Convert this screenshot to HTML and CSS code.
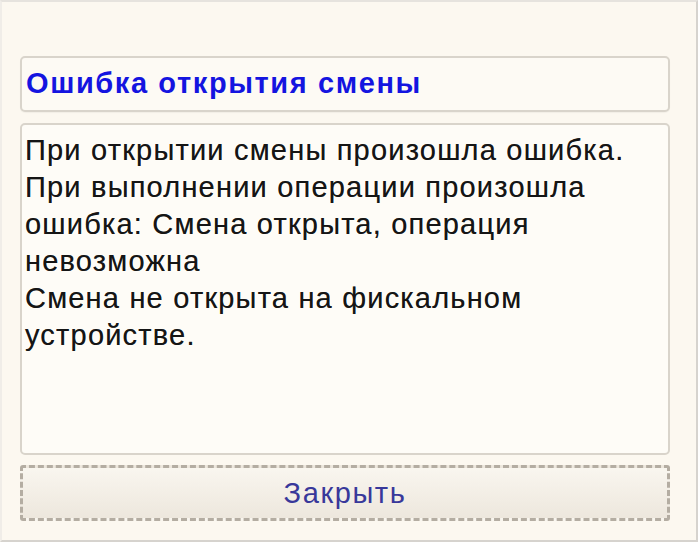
FILE: index.html
```html
<!DOCTYPE html>
<html lang="ru">
<head>
<meta charset="utf-8">
<link rel="stylesheet" href="styles.css">
</head>
<body>
<div class="window">
  <div class="title-box">Ошибка открытия смены</div>
  <div class="message-box">При открытии смены произошла ошибка.<br>При выполнении операции произошла ошибка: Смена открыта, операция невозможна<br>Смена не открыта на фискальном устройстве.</div>
  <div class="button"><span>Закрыть</span></div>
</div>
</body>
</html>
```
FILE: styles.css
```css
html, body {
  margin: 0;
  padding: 0;
  width: 698px;
  height: 542px;
  overflow: hidden;
  background: #fbf7ef;
}
.window {
  box-sizing: border-box;
  width: 698px;
  height: 542px;
  border-top: 2px solid #e6e3de;
  border-right: 2px solid #d6d3ce;
  border-bottom: 2px solid #d6d3ce;
  border-left: 2px solid #f0ede8;
  background: #fcf8f0;
  padding: 54px 26px 18px 18px;
  display: flex;
  flex-direction: column;
  font-family: "Liberation Sans", Arial, sans-serif;
}
.title-box {
  box-sizing: border-box;
  height: 56px;
  border: 2px solid #d9d4cb;
  border-radius: 5px;
  background: #fdfaf4;
  color: #1414e0;
  font-weight: bold;
  font-size: 29px;
  letter-spacing: 1.6px;
  display: flex;
  align-items: center;
  padding: 0 0 1px 4px;
  box-shadow: 0 1px 1px rgba(0,0,0,0.04);
}
.message-box {
  box-sizing: border-box;
  margin-top: 11px;
  height: 332px;
  border: 2px solid #d9d4cb;
  border-radius: 5px;
  background: #fefcf7;
  color: #151515;
  font-size: 29px;
  letter-spacing: 1.2px;
  line-height: 37px;
  padding: 7px 20px 0 3px;
  text-shadow: 0 0 0.5px rgba(0,0,0,0.5);
}
.button {
  box-sizing: border-box;
  margin-top: 10px;
  height: 56px;
  border: 3px dashed #b4ada2;
  border-radius: 3px;
  background: linear-gradient(#f9f6ef, #ede7dd);
  display: flex;
  align-items: center;
  justify-content: center;
  color: #38389a;
  font-size: 29px;
  letter-spacing: 1.6px;
}
```
